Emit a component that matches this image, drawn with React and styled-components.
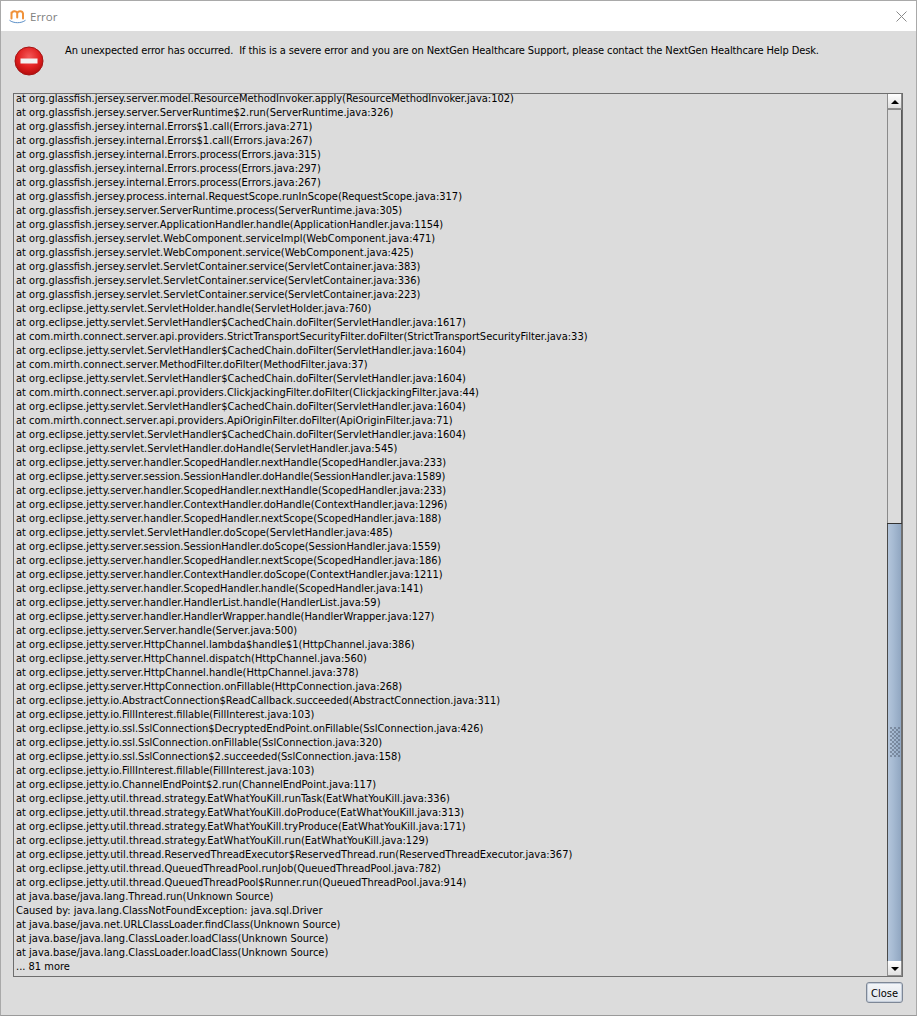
import React from 'react'
import styled, { createGlobalStyle } from 'styled-components'

const trace = [
 'at org.glassfish.jersey.server.model.ResourceMethodInvoker.apply(ResourceMethodInvoker.java:102)',
 'at org.glassfish.jersey.server.ServerRuntime$2.run(ServerRuntime.java:326)',
 'at org.glassfish.jersey.internal.Errors$1.call(Errors.java:271)',
 'at org.glassfish.jersey.internal.Errors$1.call(Errors.java:267)',
 'at org.glassfish.jersey.internal.Errors.process(Errors.java:315)',
 'at org.glassfish.jersey.internal.Errors.process(Errors.java:297)',
 'at org.glassfish.jersey.internal.Errors.process(Errors.java:267)',
 'at org.glassfish.jersey.process.internal.RequestScope.runInScope(RequestScope.java:317)',
 'at org.glassfish.jersey.server.ServerRuntime.process(ServerRuntime.java:305)',
 'at org.glassfish.jersey.server.ApplicationHandler.handle(ApplicationHandler.java:1154)',
 'at org.glassfish.jersey.servlet.WebComponent.serviceImpl(WebComponent.java:471)',
 'at org.glassfish.jersey.servlet.WebComponent.service(WebComponent.java:425)',
 'at org.glassfish.jersey.servlet.ServletContainer.service(ServletContainer.java:383)',
 'at org.glassfish.jersey.servlet.ServletContainer.service(ServletContainer.java:336)',
 'at org.glassfish.jersey.servlet.ServletContainer.service(ServletContainer.java:223)',
 'at org.eclipse.jetty.servlet.ServletHolder.handle(ServletHolder.java:760)',
 'at org.eclipse.jetty.servlet.ServletHandler$CachedChain.doFilter(ServletHandler.java:1617)',
 'at com.mirth.connect.server.api.providers.StrictTransportSecurityFilter.doFilter(StrictTransportSecurityFilter.java:33)',
 'at org.eclipse.jetty.servlet.ServletHandler$CachedChain.doFilter(ServletHandler.java:1604)',
 'at com.mirth.connect.server.MethodFilter.doFilter(MethodFilter.java:37)',
 'at org.eclipse.jetty.servlet.ServletHandler$CachedChain.doFilter(ServletHandler.java:1604)',
 'at com.mirth.connect.server.api.providers.ClickjackingFilter.doFilter(ClickjackingFilter.java:44)',
 'at org.eclipse.jetty.servlet.ServletHandler$CachedChain.doFilter(ServletHandler.java:1604)',
 'at com.mirth.connect.server.api.providers.ApiOriginFilter.doFilter(ApiOriginFilter.java:71)',
 'at org.eclipse.jetty.servlet.ServletHandler$CachedChain.doFilter(ServletHandler.java:1604)',
 'at org.eclipse.jetty.servlet.ServletHandler.doHandle(ServletHandler.java:545)',
 'at org.eclipse.jetty.server.handler.ScopedHandler.nextHandle(ScopedHandler.java:233)',
 'at org.eclipse.jetty.server.session.SessionHandler.doHandle(SessionHandler.java:1589)',
 'at org.eclipse.jetty.server.handler.ScopedHandler.nextHandle(ScopedHandler.java:233)',
 'at org.eclipse.jetty.server.handler.ContextHandler.doHandle(ContextHandler.java:1296)',
 'at org.eclipse.jetty.server.handler.ScopedHandler.nextScope(ScopedHandler.java:188)',
 'at org.eclipse.jetty.servlet.ServletHandler.doScope(ServletHandler.java:485)',
 'at org.eclipse.jetty.server.session.SessionHandler.doScope(SessionHandler.java:1559)',
 'at org.eclipse.jetty.server.handler.ScopedHandler.nextScope(ScopedHandler.java:186)',
 'at org.eclipse.jetty.server.handler.ContextHandler.doScope(ContextHandler.java:1211)',
 'at org.eclipse.jetty.server.handler.ScopedHandler.handle(ScopedHandler.java:141)',
 'at org.eclipse.jetty.server.handler.HandlerList.handle(HandlerList.java:59)',
 'at org.eclipse.jetty.server.handler.HandlerWrapper.handle(HandlerWrapper.java:127)',
 'at org.eclipse.jetty.server.Server.handle(Server.java:500)',
 'at org.eclipse.jetty.server.HttpChannel.lambda$handle$1(HttpChannel.java:386)',
 'at org.eclipse.jetty.server.HttpChannel.dispatch(HttpChannel.java:560)',
 'at org.eclipse.jetty.server.HttpChannel.handle(HttpChannel.java:378)',
 'at org.eclipse.jetty.server.HttpConnection.onFillable(HttpConnection.java:268)',
 'at org.eclipse.jetty.io.AbstractConnection$ReadCallback.succeeded(AbstractConnection.java:311)',
 'at org.eclipse.jetty.io.FillInterest.fillable(FillInterest.java:103)',
 'at org.eclipse.jetty.io.ssl.SslConnection$DecryptedEndPoint.onFillable(SslConnection.java:426)',
 'at org.eclipse.jetty.io.ssl.SslConnection.onFillable(SslConnection.java:320)',
 'at org.eclipse.jetty.io.ssl.SslConnection$2.succeeded(SslConnection.java:158)',
 'at org.eclipse.jetty.io.FillInterest.fillable(FillInterest.java:103)',
 'at org.eclipse.jetty.io.ChannelEndPoint$2.run(ChannelEndPoint.java:117)',
 'at org.eclipse.jetty.util.thread.strategy.EatWhatYouKill.runTask(EatWhatYouKill.java:336)',
 'at org.eclipse.jetty.util.thread.strategy.EatWhatYouKill.doProduce(EatWhatYouKill.java:313)',
 'at org.eclipse.jetty.util.thread.strategy.EatWhatYouKill.tryProduce(EatWhatYouKill.java:171)',
 'at org.eclipse.jetty.util.thread.strategy.EatWhatYouKill.run(EatWhatYouKill.java:129)',
 'at org.eclipse.jetty.util.thread.ReservedThreadExecutor$ReservedThread.run(ReservedThreadExecutor.java:367)',
 'at org.eclipse.jetty.util.thread.QueuedThreadPool.runJob(QueuedThreadPool.java:782)',
 'at org.eclipse.jetty.util.thread.QueuedThreadPool$Runner.run(QueuedThreadPool.java:914)',
 'at java.base/java.lang.Thread.run(Unknown Source)',
 'Caused by: java.lang.ClassNotFoundException: java.sql.Driver',
 'at java.base/java.net.URLClassLoader.findClass(Unknown Source)',
 'at java.base/java.lang.ClassLoader.loadClass(Unknown Source)',
 'at java.base/java.lang.ClassLoader.loadClass(Unknown Source)',
 '... 81 more',
]

const GlobalStyle = createGlobalStyle`
 html, body {
  margin: 0;
  padding: 0;
  background: #dcdcdc;
 }
`

const Window = styled.div`
 box-sizing: border-box;
 width: 917px;
 height: 1016px;
 display: flex;
 flex-direction: column;
 background: #dcdcdc;
 border: 1px solid #a9a9a9;
 border-bottom-color: #9a9a9a;
 font-family: "DejaVu Sans Condensed", "DejaVu Sans", sans-serif;
 font-stretch: condensed;
 font-size: 11px;
 color: #000;
`

const TitleBar = styled.div`
 height: 30px;
 flex: none;
 display: flex;
 align-items: center;
 background: #fff;
 padding: 0 9px 0 8px;
`

const TitleText = styled.span`
 margin-left: 4px;
 font-family: "Open Sans", sans-serif;
 font-stretch: normal;
 font-size: 11.5px;
 color: #808080;
 flex: 1;
`

const Body = styled.div`
 flex: 1;
 min-height: 0;
 display: flex;
 flex-direction: column;
 padding: 0 13px 0 12px;
`

const MessageRow = styled.div`
 height: 62px;
 flex: none;
 display: flex;
 align-items: flex-start;
`

const ErrorIcon = styled.svg`
 width: 30px;
 height: 30px;
 margin: 15px 0 0 1px;
 flex: none;
`

const Message = styled.p`
 margin: 13px 0 0 21px;
 line-height: 14px;
 letter-spacing: -0.11px;
 white-space: pre;
`

const TraceBox = styled.div`
 box-sizing: border-box;
 height: 884px;
 flex: none;
 display: flex;
 border: 1px solid #6e6e6e;
`

const TraceText = styled.div`
 flex: 1;
 min-width: 0;
 overflow: hidden;
 padding: 0 0 0 2px;
`

const TraceLine = styled.div`
 height: 14px;
 line-height: 14px;
 white-space: nowrap;
 &:first-child {
  margin-top: -2px;
 }
`

const ScrollBar = styled.div`
 width: 15px;
 flex: none;
 display: flex;
 flex-direction: column;
`

const Arrow = styled.div`
 height: 15px;
 flex: none;
 display: flex;
 align-items: center;
 justify-content: center;
 background: linear-gradient(#fff, #dedede);
 box-shadow: inset -1px -1px 0 #8f8f8f, inset 1px 0 0 #8f8f8f;
`

const Triangle = styled.span`
 width: 0;
 height: 0;
 border-left: 4px solid transparent;
 border-right: 4px solid transparent;
 border-${p => (p.$down ? 'top' : 'bottom')}: 4px solid #000;
`

const Track = styled.div`
 height: 415px;
 flex: none;
 box-sizing: border-box;
 background: #dcdcdc;
 border-top: 1px solid #8a8a8a;
 border-bottom: 1px solid #333;
 box-shadow: inset 1px 0 0 #8a8a8a, inset -1px 0 0 #5a5a5a;
`

const Thumb = styled.div`
 flex: 1;
 display: flex;
 flex-direction: column;
 justify-content: flex-end;
 align-items: center;
 background: linear-gradient(90deg, #b6c7dc, #a7bbd3 40%, #8ea4bf);
 box-shadow: inset 1px 0 0 #4a4a4a, inset -1px 0 0 #6f6f6f;
`

const Grip = styled.div`
 width: 10px;
 height: 30px;
 margin-bottom: 204px;
 background-image:
  radial-gradient(circle at 1px 1px, #4a5566 0.6px, transparent 0.8px),
  radial-gradient(circle at 1px 1px, #4a5566 0.6px, transparent 0.8px);
 background-size: 4px 4px;
 background-position: 0 0, 2px 2px;
`

const Footer = styled.div`
 flex: 1;
 display: flex;
 justify-content: flex-end;
 align-items: flex-start;
 padding: 5px 0 0;
`

const CloseButton = styled.button`
 box-sizing: border-box;
 width: 37px;
 height: 21px;
 padding: 1px 0 0;
 font: inherit;
 color: #000;
 background: linear-gradient(#f4f6f9, #dfe4ea);
 border: 1px solid #7d8796;
 border-radius: 3px;
 box-shadow: inset 0 0 0 1px #c5cedb;
`

function MirthLogo() {
 return (
  <svg width="17" height="17" viewBox="0 0 17 17" fill="none">
   <path d="M2.5 10.5 V4.5 M2.5 5.5 C3 2.8 7.6 2.4 8.2 5 V9.5 M8.2 5.5 C9 2.6 13.4 2.6 14 5.5 V10.5" stroke="#f0923a" strokeWidth="2" strokeLinecap="round" />
   <path d="M0.8 12.5 C4.5 15.5 12.5 15.5 16.2 12.5" stroke="#5b8fc7" strokeWidth="1" strokeLinecap="round" />
  </svg>
 )
}

function CloseGlyph() {
 return (
  <svg width="11" height="11" viewBox="0 0 11 11">
   <path d="M0.5 0.5 L10.5 10.5 M10.5 0.5 L0.5 10.5" stroke="#8a8a8a" strokeWidth="1" />
  </svg>
 )
}

function StopIcon() {
 return (
  <ErrorIcon viewBox="0 0 30 30">
   <defs>
    <radialGradient id="stopFill" cx="50%" cy="35%" r="65%">
     <stop offset="0%" stopColor="#f45a5a" />
     <stop offset="60%" stopColor="#e01f1f" />
     <stop offset="100%" stopColor="#b30d0d" />
    </radialGradient>
   </defs>
   <circle cx="15" cy="15" r="14" fill="url(#stopFill)" stroke="#a51414" strokeWidth="1" />
   <rect x="6.5" y="12.5" width="17" height="5" fill="#f2f2f2" />
  </ErrorIcon>
 )
}

export default function App() {
 return (
  <>
   <GlobalStyle />
   <Window>
    <TitleBar>
     <MirthLogo />
     <TitleText>Error</TitleText>
     <CloseGlyph />
    </TitleBar>
    <Body>
     <MessageRow>
      <StopIcon />
      <Message>An unexpected error has occurred.  If this is a severe error and you are on NextGen Healthcare Support, please contact the NextGen Healthcare Help Desk.</Message>
     </MessageRow>
     <TraceBox>
      <TraceText>
       {trace.map((line, i) => (
        <TraceLine key={i}>{line}</TraceLine>
       ))}
      </TraceText>
      <ScrollBar>
       <Arrow><Triangle /></Arrow>
       <Track />
       <Thumb><Grip /></Thumb>
       <Arrow><Triangle $down /></Arrow>
      </ScrollBar>
     </TraceBox>
     <Footer>
      <CloseButton>Close</CloseButton>
     </Footer>
    </Body>
   </Window>
  </>
 )
}
